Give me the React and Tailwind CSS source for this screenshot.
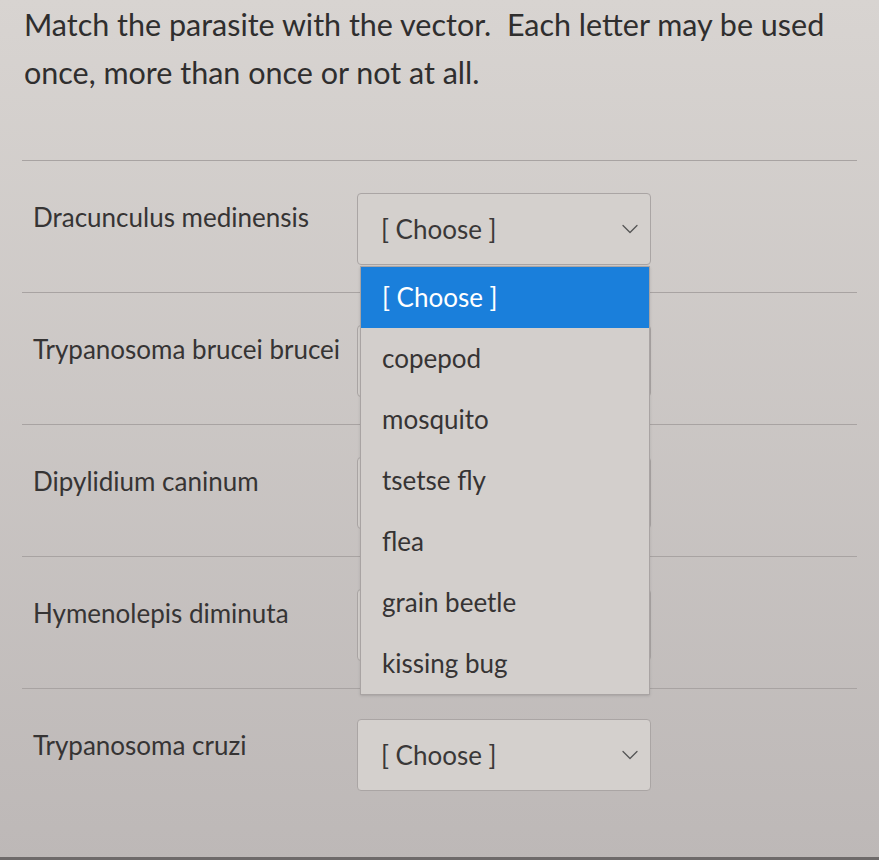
import { ChevronDown } from 'lucide-react'

const parasites = [
  'Dracunculus medinensis',
  'Trypanosoma brucei brucei',
  'Dipylidium caninum',
  'Hymenolepis diminuta',
  'Trypanosoma cruzi',
]

const vectors = ['[ Choose ]', 'copepod', 'mosquito', 'tsetse fly', 'flea', 'grain beetle', 'kissing bug']

// selects under the open list only show their border
function Select({ covered }) {
  return (
    <div className="flex items-center justify-between w-[294px] h-[72px] pl-[23px] pr-[6px] border border-[#aaa5a4] rounded-[4px] bg-[#d4d0cd]">
      {!covered && (
        <>
          <span className="text-[26px] text-[#3a3838]">[ Choose ]</span>
          <ChevronDown size={28} strokeWidth={1.1} className="text-[#555]" />
        </>
      )}
    </div>
  )
}

export default function App() {
  return (
    <div
      className="relative flex flex-col w-[879px] h-[860px] overflow-hidden bg-gradient-to-b from-[#d8d4d1] to-[#bdb8b7] text-[#333]"
      style={{ fontFamily: 'Lato, "Open Sans", sans-serif' }}
    >
      <p className="px-[24px] text-[30.5px] leading-[48px] text-[#2f2e2e]">
        Match the parasite with the vector.&nbsp; Each letter may be used
        <br />
        once, more than once or not at all.
      </p>

      <div className="mt-[64px] mx-[22px]">
        {parasites.map((name, i) => (
          <div
            key={name}
            className="flex items-start h-[132px] border-t border-[#a8a3a2]"
          >
            <div className="w-[335px] pl-[11px] pt-[40px] text-[26px] leading-[32px] text-[#363434]">
              {name}
            </div>
            <div className={i === 4 ? 'mt-[30px]' : 'mt-[32px]'}>
              <Select covered={i > 0 && i < 4} />
            </div>
          </div>
        ))}
      </div>

      <div className="flex-1" />
      <div className="h-[3px] bg-[#6e6a6a]" />

      {/* open option list of the first select */}
      <div className="absolute left-[360px] top-[266px] w-[290px] border border-[#a9a4a3] bg-[#d3cfcc] shadow-sm">
        {vectors.map((v, i) => (
          <div
            key={v}
            className={`flex items-center h-[61px] pl-[21px] text-[26px] ${
              i === 0 ? 'bg-[#1a7fdb] text-white' : 'text-[#363434]'
            }`}
          >
            {v}
          </div>
        ))}
      </div>
    </div>
  )
}
